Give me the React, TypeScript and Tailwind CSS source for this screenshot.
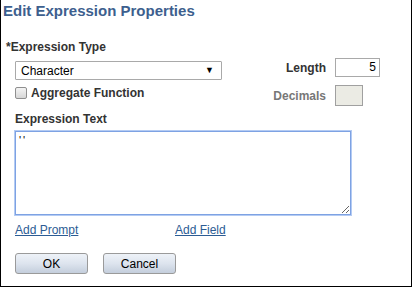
import { useState } from "react";

export default function App() {
  const [text, setText] = useState("''");

  return (
    <div className="w-[412px] h-[287px] bg-white border-x border-b border-black font-['Liberation_Sans',Arial,sans-serif] text-[#333] overflow-hidden">
      {/* Title */}
      <h1 className="pl-[2px] pt-[2px] text-[15px] leading-[18px] font-bold text-[#3d5f8e]">
        Edit Expression Properties
      </h1>

      {/* Expression type */}
      <div className="mt-[20px] pl-[5px] text-[12px] leading-[14px] font-bold">
        *Expression Type
      </div>

      <div className="flex mt-[4px]">
        <div className="flex flex-col pl-[14px] w-[259px]">
          <div className="mt-[3px] w-[207px] h-[19px] border border-[#a9a9a9] rounded-[1px] flex items-center justify-between pl-[5px] pr-[7px] text-[12px] text-black">
            <span>Character</span>
            <span className="text-[9px]">▼</span>
          </div>
          <label className="mt-[6px] flex items-center gap-[4px] text-[12px] leading-[14px] font-bold">
            <span className="w-[12px] h-[12px] rounded-[2px] border border-[#8f8f8f] bg-gradient-to-b from-[#f4f4f4] to-[#d7d7d7]" />
            Aggregate Function
          </label>
        </div>
        <div className="flex flex-col w-[128px]">
          <div className="flex items-center h-[19px]">
            <span className="w-[66px] text-right text-[12px] font-bold">Length</span>
            <div className="ml-[9px] w-[45px] h-[19px] border border-[#a9a9a9] text-[12px] text-black text-right pr-[3px] leading-[17px]">
              5
            </div>
          </div>
          <div className="flex items-center mt-[8px] h-[21px]">
            <span className="w-[66px] text-right text-[12px] font-bold text-[#777]">Decimals</span>
            <div className="ml-[9px] w-[28px] h-[21px] border border-[#a0a0a0] bg-[#ebebe4]" />
          </div>
        </div>
      </div>

      {/* Expression text */}
      <div className="mt-[6px] pl-[14px] text-[12px] leading-[14px] font-bold">
        Expression Text
      </div>
      <div className="pl-[14px] mt-[5px]">
        <textarea
          value={text}
          onChange={(e) => setText(e.target.value)}
          className="block w-[336px] h-[84px] border border-[#7ea2e3] shadow-[0_0_0_1px_#b4cbf3] px-[3px] py-[1px] text-[11px] leading-[14px] tracking-[2px] text-black outline-none resize"
        />
      </div>

      {/* Links */}
      <div className="flex pl-[14px] mt-[8px] text-[12px] leading-[14px]">
        <a href="#" className="underline text-[#2c5c94] w-[160px]">
          Add Prompt
        </a>
        <a href="#" className="underline text-[#2c5c94]">
          Add Field
        </a>
      </div>

      {/* Buttons */}
      <div className="flex gap-[15px] pl-[14px] mt-[16px]">
        <button className="w-[73px] h-[21px] rounded-[3px] border border-[#9a9a9a] bg-gradient-to-b from-[#eef2f8] via-[#dde4ee] to-[#c4cedc] text-[12px] text-black">
          OK
        </button>
        <button className="w-[73px] h-[21px] rounded-[3px] border border-[#9a9a9a] bg-gradient-to-b from-[#eef2f8] via-[#dde4ee] to-[#c4cedc] text-[12px] text-black">
          Cancel
        </button>
      </div>
    </div>
  );
}
